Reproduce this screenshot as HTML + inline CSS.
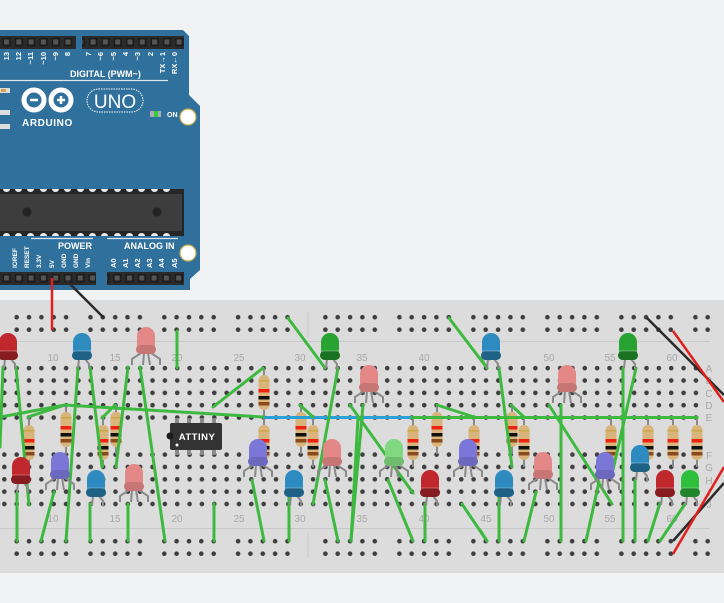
<!DOCTYPE html>
<html><head><meta charset="utf-8"><style>
html,body{margin:0;padding:0;background:#f1f2f4;}
svg{display:block;}
text{font-family:"Liberation Sans",sans-serif;}
</style></head><body>
<svg width="724" height="603" viewBox="0 0 724 603" xmlns="http://www.w3.org/2000/svg">
<defs>
<pattern id="main" x="10.5" y="362" width="12.35" height="12.35" patternUnits="userSpaceOnUse">
<circle cx="6.18" cy="6.18" r="2.3" fill="#3e3e3e"/></pattern>
<pattern id="railL" x="10.5" y="311" width="73.8" height="12.5" patternUnits="userSpaceOnUse">
<g fill="#3e3e3e"><circle cx="6.18" cy="6.2" r="2.3"/><circle cx="18.5" cy="6.2" r="2.3"/><circle cx="30.9" cy="6.2" r="2.3"/><circle cx="43.2" cy="6.2" r="2.3"/><circle cx="55.6" cy="6.2" r="2.3"/></g></pattern>
<pattern id="railR" x="319.2" y="311" width="74" height="12.5" patternUnits="userSpaceOnUse">
<g fill="#3e3e3e"><circle cx="6.18" cy="6.2" r="2.3"/><circle cx="18.5" cy="6.2" r="2.3"/><circle cx="30.9" cy="6.2" r="2.3"/><circle cx="43.2" cy="6.2" r="2.3"/><circle cx="55.6" cy="6.2" r="2.3"/></g></pattern>
<pattern id="railL2" x="10.5" y="535" width="73.8" height="12.5" patternUnits="userSpaceOnUse">
<g fill="#3e3e3e"><circle cx="6.18" cy="6.2" r="2.3"/><circle cx="18.5" cy="6.2" r="2.3"/><circle cx="30.9" cy="6.2" r="2.3"/><circle cx="43.2" cy="6.2" r="2.3"/><circle cx="55.6" cy="6.2" r="2.3"/></g></pattern>
<pattern id="railR2" x="319.2" y="535" width="74" height="12.5" patternUnits="userSpaceOnUse">
<g fill="#3e3e3e"><circle cx="6.18" cy="6.2" r="2.3"/><circle cx="18.5" cy="6.2" r="2.3"/><circle cx="30.9" cy="6.2" r="2.3"/><circle cx="43.2" cy="6.2" r="2.3"/><circle cx="55.6" cy="6.2" r="2.3"/></g></pattern>
<pattern id="hdr" x="0.5" y="36" width="12.3" height="13" patternUnits="userSpaceOnUse">
<rect x="2" y="2" width="8.3" height="8.5" fill="#1c1c1c"/><rect x="3.5" y="3.5" width="5" height="5" fill="#555"/></pattern>
<pattern id="hdr2" x="0.5" y="272" width="12.3" height="13" patternUnits="userSpaceOnUse">
<rect x="2" y="2" width="8.3" height="8.5" fill="#1c1c1c"/><rect x="3.5" y="3.5" width="5" height="5" fill="#555"/></pattern>
<symbol id="led2" overflow="visible">
<g stroke="#8a8a8a" stroke-width="2" fill="none"><path d="M-3,26 L-4,35"/><path d="M3,26 L7,31 L7,36"/></g>
<path d="M-9,25 V9 A9,9 0 0 1 9,9 V25 Z" fill="currentColor"/>
<rect x="-10" y="18" width="20" height="9" rx="4.5" fill="currentColor"/>
<rect x="-10" y="18" width="20" height="9" rx="4.5" fill="#000" opacity="0.3"/>
<path d="M-9,18 H9" stroke="#fff" stroke-opacity="0.2" stroke-width="1.5"/>
</symbol>
<symbol id="led4" overflow="visible">
<g stroke="#8a8a8a" stroke-width="2" fill="none"><path d="M-5,26 L-14,32 L-14,38"/><path d="M-2,26 L-3,38"/><path d="M2,26 L4,38"/><path d="M5,26 L14,32 L14,38"/></g>
<path d="M-9,25 V9 A9,9 0 0 1 9,9 V25 Z" fill="currentColor"/>
<rect x="-10" y="18" width="20" height="9" rx="4.5" fill="currentColor"/>
<rect x="-10" y="18" width="20" height="9" rx="4.5" fill="#000" opacity="0.12"/>
</symbol>
<symbol id="res" overflow="visible">
<path d="M0,-7 V42" stroke="#8a8a8a" stroke-width="2"/>
<rect x="-5.5" y="0" width="11" height="35" rx="5" fill="#d9b57c"/>
<rect x="-5.5" y="5" width="11" height="1.5" fill="#c9a84a"/>
<rect x="-5.5" y="14" width="11" height="3.5" fill="#e21"/>
<rect x="-5.5" y="21" width="11" height="3.5" fill="#111"/>
<rect x="-5.5" y="27" width="11" height="3.5" fill="#8a4a1c"/>
</symbol>
</defs>

<!-- page bg -->
<rect width="724" height="603" fill="#f1f2f4"/>
<!-- breadboard -->
<rect x="0" y="300" width="724" height="273" fill="#dcdcdc"/>
<path d="M0,341.5 H710 M0,528.5 H710" stroke="#c9c9c9" stroke-width="1"/>
<path d="M308,312 V338 M308,532 V557" stroke="#c9c9c9"/>
<rect x="0" y="311" width="305" height="25" fill="url(#railL)"/>
<rect x="312" y="311" width="400" height="25" fill="url(#railR)"/>
<rect x="0" y="535" width="305" height="25" fill="url(#railL2)"/>
<rect x="312" y="535" width="400" height="25" fill="url(#railR2)"/>
<rect x="0" y="362" width="703" height="62" fill="url(#main)"/>
<rect x="0" y="449" width="703" height="62" fill="url(#main)"/>
<g fill="#a8a8a8" font-size="10" text-anchor="middle">
<text x="53" y="361">10</text><text x="115" y="361">15</text><text x="177" y="361">20</text><text x="239" y="361">25</text><text x="300" y="361">30</text><text x="362" y="361">35</text><text x="424" y="361">40</text><text x="486" y="361">45</text><text x="549" y="361">50</text><text x="610" y="361">55</text><text x="672" y="361">60</text>
<text x="53" y="522">10</text><text x="115" y="522">15</text><text x="177" y="522">20</text><text x="239" y="522">25</text><text x="300" y="522">30</text><text x="362" y="522">35</text><text x="424" y="522">40</text><text x="486" y="522">45</text><text x="549" y="522">50</text><text x="610" y="522">55</text><text x="672" y="522">60</text>
<text x="709" y="372">A</text><text x="709" y="384">B</text><text x="709" y="397">C</text><text x="709" y="409">D</text><text x="709" y="421">E</text><text x="709" y="459">F</text><text x="709" y="471">G</text><text x="709" y="484">H</text><text x="709" y="496">I</text><text x="709" y="508">J</text>
</g>

<!-- Arduino -->
<path d="M0,30 H183 L189,36 V95 L200,106 V270 L190,279 V290 H0 Z" fill="#30709c"/>
<rect x="0" y="36" width="76" height="13" fill="#2a2a2a"/><rect x="0" y="36" width="76" height="13" fill="url(#hdr)"/>
<rect x="82" y="36" width="102" height="13" fill="#2a2a2a"/><rect x="82" y="36" width="102" height="13" fill="url(#hdr)" transform="translate(0.5,0)"/>
<rect x="0" y="272" width="96" height="13" fill="#2a2a2a"/><rect x="0" y="272" width="96" height="13" fill="url(#hdr2)"/>
<rect x="107" y="272" width="77" height="13" fill="#2a2a2a"/><rect x="107" y="272" width="77" height="13" fill="url(#hdr2)"/>
<g fill="#fff" font-size="7.5" font-weight="bold" text-anchor="end">
<text transform="translate(9,52) rotate(-90)">13</text>
<text transform="translate(21,52) rotate(-90)">12</text>
<text transform="translate(33,52) rotate(-90)">~11</text>
<text transform="translate(46,52) rotate(-90)">~10</text>
<text transform="translate(58,52) rotate(-90)">~9</text>
<text transform="translate(70,52) rotate(-90)">8</text>
<text transform="translate(91,52) rotate(-90)">7</text>
<text transform="translate(103,52) rotate(-90)">~6</text>
<text transform="translate(116,52) rotate(-90)">~5</text>
<text transform="translate(128,52) rotate(-90)">4</text>
<text transform="translate(140,52) rotate(-90)">~3</text>
<text transform="translate(153,52) rotate(-90)">2</text>
<text transform="translate(165,52) rotate(-90)">TX→1</text>
<text transform="translate(177,52) rotate(-90)">RX←0</text>
</g>
<g fill="#fff" font-size="6.5" font-weight="bold" text-anchor="start">
<text transform="translate(17,268) rotate(-90)">IOREF</text>
<text transform="translate(29,268) rotate(-90)">RESET</text>
<text transform="translate(41,268) rotate(-90)">3.3V</text>
<text transform="translate(54,268) rotate(-90)">5V</text>
<text transform="translate(66,268) rotate(-90)">GND</text>
<text transform="translate(78,268) rotate(-90)">GND</text>
<text transform="translate(90,268) rotate(-90)">Vin</text>
<text font-size="7.5" transform="translate(116,268) rotate(-90)">A0</text>
<text font-size="7.5" transform="translate(128,268) rotate(-90)">A1</text>
<text font-size="7.5" transform="translate(140,268) rotate(-90)">A2</text>
<text font-size="7.5" transform="translate(152,268) rotate(-90)">A3</text>
<text font-size="7.5" transform="translate(164,268) rotate(-90)">A4</text>
<text font-size="7.5" transform="translate(177,268) rotate(-90)">A5</text>
</g>
<text x="70" y="77" fill="#fff" font-size="9" font-weight="bold">DIGITAL (PWM~)</text>
<path d="M0,80.5 H168" stroke="#dfe8ef" stroke-width="1.2"/>
<path d="M31,238.5 H93 M107,238.5 H178" stroke="#dfe8ef" stroke-width="1.2"/>
<text x="58" y="249" fill="#fff" font-size="9" font-weight="bold">POWER</text>
<text x="124" y="249" fill="#fff" font-size="9" font-weight="bold">ANALOG IN</text>
<!-- logo -->
<g stroke="#fff" stroke-width="5" fill="none"><circle cx="34" cy="100" r="10"/><circle cx="61" cy="100" r="10"/></g>
<path d="M30,100 H38 M57,100 H65 M61,96 V104" stroke="#fff" stroke-width="2.5"/>
<text x="22" y="126" fill="#fff" font-size="10" font-weight="bold" letter-spacing="0.6">ARDUINO</text>
<rect x="87" y="89" width="56" height="23" rx="11.5" fill="none" stroke="#fff" stroke-width="1" stroke-dasharray="1.5 1"/>
<text x="115" y="108" fill="#fff" font-size="19" text-anchor="middle">UNO</text>
<rect x="150" y="111" width="11" height="6" fill="#aab"/><rect x="154" y="111" width="4" height="6" fill="#3c3"/>
<text x="167" y="117" fill="#fff" font-size="7" font-weight="bold">ON</text>
<circle cx="188" cy="117" r="8" fill="#fff" stroke="#c9a94c" stroke-width="1.2"/>
<circle cx="188" cy="253" r="8" fill="#fff" stroke="#c9a94c" stroke-width="1.2"/>
<rect x="0" y="88" width="10" height="5" fill="#ddd"/><rect x="1" y="89" width="5" height="3" fill="#d8a050"/>
<rect x="0" y="110" width="10" height="5" fill="#ddd"/><rect x="0" y="124" width="10" height="5" fill="#ddd"/>
<!-- chip -->
<rect x="0" y="189" width="184" height="47" fill="#262626"/>
<rect x="0" y="194" width="182" height="37" fill="#3d3d3d"/>
<g fill="#eee">
<path d="M3,189 h7 a3.5,3 0 0 1 -7,0z M15,189 h7 a3.5,3 0 0 1 -7,0z M27,189 h7 a3.5,3 0 0 1 -7,0z M40,189 h7 a3.5,3 0 0 1 -7,0z M52,189 h7 a3.5,3 0 0 1 -7,0z M64,189 h7 a3.5,3 0 0 1 -7,0z M77,189 h7 a3.5,3 0 0 1 -7,0z M89,189 h7 a3.5,3 0 0 1 -7,0z M101,189 h7 a3.5,3 0 0 1 -7,0z M114,189 h7 a3.5,3 0 0 1 -7,0z M126,189 h7 a3.5,3 0 0 1 -7,0z M138,189 h7 a3.5,3 0 0 1 -7,0z M151,189 h7 a3.5,3 0 0 1 -7,0z M163,189 h7 a3.5,3 0 0 1 -7,0z"/>
<path d="M3,236 h7 a3.5,3 0 0 0 -7,0z M15,236 h7 a3.5,3 0 0 0 -7,0z M27,236 h7 a3.5,3 0 0 0 -7,0z M40,236 h7 a3.5,3 0 0 0 -7,0z M52,236 h7 a3.5,3 0 0 0 -7,0z M64,236 h7 a3.5,3 0 0 0 -7,0z M77,236 h7 a3.5,3 0 0 0 -7,0z M89,236 h7 a3.5,3 0 0 0 -7,0z M101,236 h7 a3.5,3 0 0 0 -7,0z M114,236 h7 a3.5,3 0 0 0 -7,0z M126,236 h7 a3.5,3 0 0 0 -7,0z M138,236 h7 a3.5,3 0 0 0 -7,0z M151,236 h7 a3.5,3 0 0 0 -7,0z M163,236 h7 a3.5,3 0 0 0 -7,0z"/>
</g>
<circle cx="27" cy="212" r="4.5" fill="#222"/><circle cx="157" cy="212" r="4.5" fill="#222"/>
<!-- arduino wires -->
<path d="M52,278 V330" stroke="#e0201c" stroke-width="2.5"/>
<path d="M67,281 L104,318" stroke="#2a2a2a" stroke-width="2.5"/>

<!-- resistors -->
<g>
<use href="#res" x="29" y="425"/><use href="#res" x="66" y="412"/><use href="#res" x="103" y="425"/><use href="#res" x="116" y="412"/>
<use href="#res" x="264" y="375"/><use href="#res" x="264" y="425"/><use href="#res" x="301" y="412"/><use href="#res" x="313" y="425"/>
<use href="#res" x="413" y="425"/><use href="#res" x="437" y="412"/><use href="#res" x="474" y="425"/><use href="#res" x="512" y="412"/>
<use href="#res" x="524" y="425"/><use href="#res" x="611" y="425"/><use href="#res" x="648" y="425"/><use href="#res" x="673" y="425"/><use href="#res" x="697" y="425"/>
</g>

<!-- ATTINY -->
<g fill="#8a8a8a"><rect x="175" y="418" width="4" height="6"/><rect x="187" y="418" width="4" height="6"/><rect x="200" y="418" width="4" height="6"/><rect x="212" y="418" width="4" height="6"/>
<rect x="175" y="449" width="4" height="6"/><rect x="187" y="449" width="4" height="6"/><rect x="200" y="449" width="4" height="6"/><rect x="212" y="449" width="4" height="6"/></g>
<rect x="170" y="423" width="52" height="27" rx="2" fill="#333"/>
<circle cx="170" cy="436" r="3.5" fill="#1b1b1b"/>
<circle cx="177" cy="445" r="1.5" fill="#fff"/>
<text x="197" y="440" fill="#fff" font-size="9.5" font-weight="bold" text-anchor="middle" letter-spacing="0.5">ATTINY</text>

<!-- blue wire -->
<path d="M264,417.5 H412" stroke="#2aa0d8" stroke-width="3"/>
<!-- green wires -->
<g stroke="#3db93f" stroke-width="3" stroke-linecap="round" fill="none">
<path d="M412,417.5 H697"/>
<path d="M0,417 L65,405"/><path d="M28,417 L65,405"/><path d="M65,405 L263,417"/><path d="M102,418 L115,405"/>
<path d="M3,367 L0,447"/><path d="M16,367 L29,505"/><path d="M78,367 L66,541"/><path d="M90,367 L102,467"/>
<path d="M128,367 L116,467"/><path d="M140,367 L165,541"/><path d="M177,331 V368"/><path d="M213,407 L263,368"/>
<path d="M214,504 V541"/><path d="M17,493 V541"/><path d="M54,492 L41,541"/><path d="M90,504 V541"/><path d="M128,504 V541"/>
<path d="M252,480 L264,541"/><path d="M289,492 V541"/><path d="M288,318 L325,368"/><path d="M338,368 L313,504"/>
<path d="M325,480 L338,541"/><path d="M351,541 L358,418"/><path d="M300,405 L313,417"/>
<path d="M350,405 L413,493"/><path d="M363,405 L351,541"/><path d="M388,480 L413,541"/><path d="M425,504 V541"/>
<path d="M437,405 L474,417"/><path d="M462,504 L487,541"/><path d="M449,318 L487,368"/>
<path d="M480,358 L487,368"/><path d="M499,368 L512,467"/><path d="M511,405 L524,417"/><path d="M499,498 V541"/><path d="M487,541 L480,530"/>
<path d="M561,405 V541"/><path d="M549,405 L612,504"/><path d="M536,492 L524,541"/><path d="M599,482 L586,541"/>
<path d="M623,368 V541"/><path d="M636,368 L613,470"/><path d="M635,480 V541"/><path d="M660,503 L648,541"/><path d="M685,504 L660,541"/>
</g>
<path d="M647,318 L724,395" stroke="#2a2a2a" stroke-width="2.5"/>
<path d="M673,331 L724,402" stroke="#e0201c" stroke-width="2.5"/>
<path d="M673,541 L724,483" stroke="#2a2a2a" stroke-width="2.5"/>
<path d="M673,554 L724,467" stroke="#e0201c" stroke-width="2.5"/>

<!-- LEDs -->
<use href="#led2" x="8" y="333" color="#c0282e"/>
<use href="#led2" x="82" y="333" color="#2e8bc0"/>
<use href="#led4" x="146" y="327" color="#e38787"/>
<use href="#led2" x="330" y="333" color="#28a332"/>
<use href="#led4" x="369" y="365" color="#e38787"/>
<use href="#led2" x="491" y="333" color="#2e8bc0"/>
<use href="#led4" x="567" y="365" color="#e38787"/>
<use href="#led2" x="628" y="333" color="#28a332"/>
<use href="#led2" x="21" y="457" color="#c0282e"/>
<use href="#led4" x="60" y="452" color="#7b77d8"/>
<use href="#led2" x="96" y="470" color="#2e8bc0"/>
<use href="#led4" x="134" y="464" color="#e38787"/>
<use href="#led4" x="258" y="439" color="#7b77d8"/>
<use href="#led2" x="294" y="470" color="#2e8bc0"/>
<use href="#led4" x="332" y="439" color="#e38787"/>
<use href="#led4" x="394" y="439" color="#80d880"/>
<use href="#led2" x="430" y="470" color="#c0282e"/>
<use href="#led4" x="468" y="439" color="#7b77d8"/>
<use href="#led2" x="504" y="470" color="#2e8bc0"/>
<use href="#led4" x="543" y="452" color="#e38787"/>
<use href="#led4" x="605" y="452" color="#7b77d8"/>
<use href="#led2" x="640" y="445" color="#2e8bc0"/>
<use href="#led2" x="665" y="470" color="#c0282e"/>
<use href="#led2" x="690" y="470" color="#2ec03c"/>
</svg>
</body></html>
